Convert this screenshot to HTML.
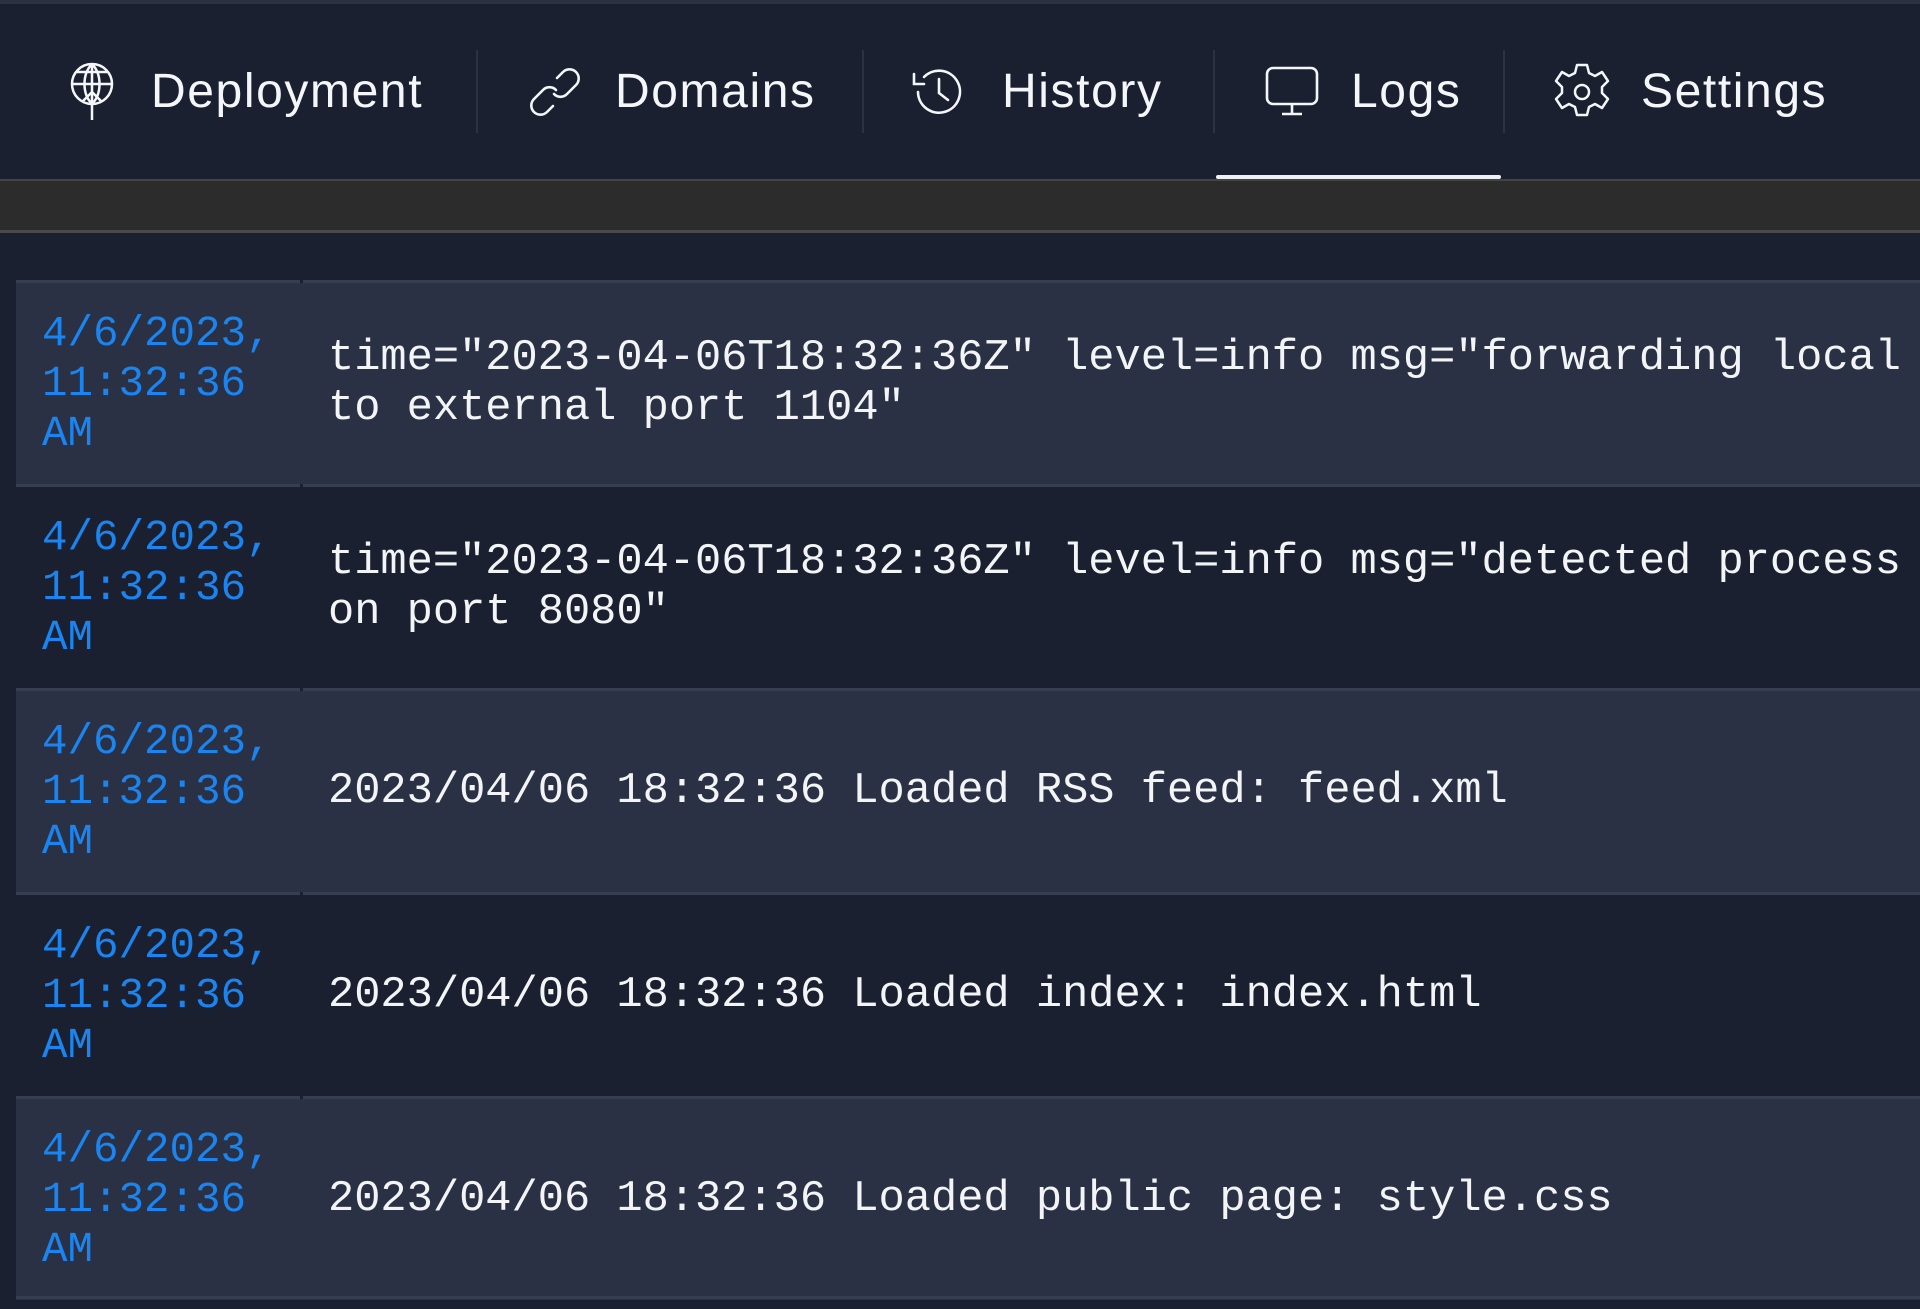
<!DOCTYPE html>
<html><head><meta charset="utf-8"><style>
html,body{margin:0;padding:0;width:1920px;height:1309px;overflow:hidden;background:#1a2030;}
.top{position:absolute;left:0;top:0;width:1920px;height:4px;background:#2a3142;}
.tab{position:absolute;top:62px;height:60px;line-height:60px;color:#f4f6fa;font-family:"Liberation Sans",sans-serif;font-size:48px;letter-spacing:1.6px;white-space:nowrap;}
.sep{position:absolute;top:50px;width:2px;height:83px;background:#2b3244;}
.ul{position:absolute;left:1216px;top:175px;width:285px;height:4px;background:#eef0f4;border-radius:2px;}
.bar{position:absolute;left:0;top:179px;width:1920px;height:54px;background:#2c2c2c;border-top:2px solid #444;border-bottom:3px solid #4a4a4a;box-sizing:border-box;}
svg{position:absolute;}
.row{position:absolute;left:16px;width:1904px;height:201px;border-top:3px solid #363e52;box-sizing:content-box;font-family:"Liberation Mono","DejaVu Sans Mono",monospace;font-size:43.7px;line-height:50px;}
.row.l{background:#2b3144;}
.row.d{background:#1a2030;}
.ts{position:absolute;left:26px;top:0;height:201px;width:260px;display:flex;align-items:center;color:#1a84f0;font-size:42.5px;}
.msg{position:absolute;left:312px;top:0;height:201px;width:1700px;display:flex;align-items:center;color:#f2f4f6;white-space:pre;}
.div{position:absolute;left:284px;top:-3px;width:3px;height:3px;background:#1a2030;}
</style></head><body>
<div class="top"></div>

<svg style="left:68px;top:62px" width="48" height="60" viewBox="0 0 48 60" fill="none" stroke="#f4f6fa" stroke-width="2.5">
<circle cx="24" cy="22" r="20"/><path d="M4 22H44M24 2V58M8 10H40M24 2C14 12 14 32 24 42M24 2C34 12 34 32 24 42M14 40L24 30L34 40"/>
</svg>
<div class="tab" style="left:151px">Deployment</div>
<div class="sep" style="left:476px"></div>

<svg style="left:527px;top:64px" width="56" height="56" viewBox="0 0 56 56" fill="none" stroke="#f4f6fa" stroke-width="2.6" stroke-linecap="round">
<path d="M30 14l6-6a9 9 0 0 1 13 13l-9 9a9 9 0 0 1-13 0"/><path d="M26 42l-6 6a9 9 0 0 1-13-13l9-9a9 9 0 0 1 13 0"/>
</svg>
<div class="tab" style="left:615px">Domains</div>
<div class="sep" style="left:862px"></div>

<svg style="left:910px;top:66px" width="56" height="52" viewBox="0 0 56 52" fill="none" stroke="#f4f6fa" stroke-width="2.6" stroke-linecap="round">
<path d="M8 26A21 21 0 1 0 14 11"/><path d="M4 8V18H14"/><path d="M29 13V27L38 34"/>
</svg>
<div class="tab" style="left:1002px">History</div>
<div class="sep" style="left:1213px"></div>

<svg style="left:1265px;top:66px" width="56" height="52" viewBox="0 0 56 52" fill="none" stroke="#f4f6fa" stroke-width="2.6">
<rect x="2" y="2" width="50" height="36" rx="6"/><path d="M27 38V47M17 48H37"/>
</svg>
<div class="tab" style="left:1351px">Logs</div>
<div class="sep" style="left:1503px"></div>
<div class="ul"></div>

<svg style="left:1553px;top:62px" width="58" height="60" viewBox="0 0 58 60" fill="none" stroke="#f4f6fa" stroke-width="2.5" stroke-linejoin="round">
<path d="M24 3h10l2 8 6 3 7-4 6 9-6 6v6l6 6-6 9-7-4-6 3-2 8H24l-2-8-6-3-7 4-6-9 6-6v-6l-6-6 6-9 7 4 6-3z"/><circle cx="29" cy="30" r="7"/>
</svg>
<div class="tab" style="left:1641px">Settings</div>

<div class="bar"></div>

<div class="row l" style="top:280px"><div class="div"></div><div class="ts">4/6/2023,<br>11:32:36<br>AM</div><div class="msg">time="2023-04-06T18:32:36Z" level=info msg="forwarding local
to external port 1104"</div></div>
<div class="row d" style="top:484px"><div class="div"></div><div class="ts">4/6/2023,<br>11:32:36<br>AM</div><div class="msg">time="2023-04-06T18:32:36Z" level=info msg="detected process
on port 8080"</div></div>
<div class="row l" style="top:688px"><div class="div"></div><div class="ts">4/6/2023,<br>11:32:36<br>AM</div><div class="msg">2023/04/06 18:32:36 Loaded RSS feed: feed.xml</div></div>
<div class="row d" style="top:892px"><div class="div"></div><div class="ts">4/6/2023,<br>11:32:36<br>AM</div><div class="msg">2023/04/06 18:32:36 Loaded index: index.html</div></div>
<div class="row l" style="top:1096px"><div class="div"></div><div class="ts">4/6/2023,<br>11:32:36<br>AM</div><div class="msg">2023/04/06 18:32:36 Loaded public page: style.css</div></div>
<div style="position:absolute;left:16px;top:1296px;width:1904px;height:3px;background:#363e52"></div>
</body></html>
